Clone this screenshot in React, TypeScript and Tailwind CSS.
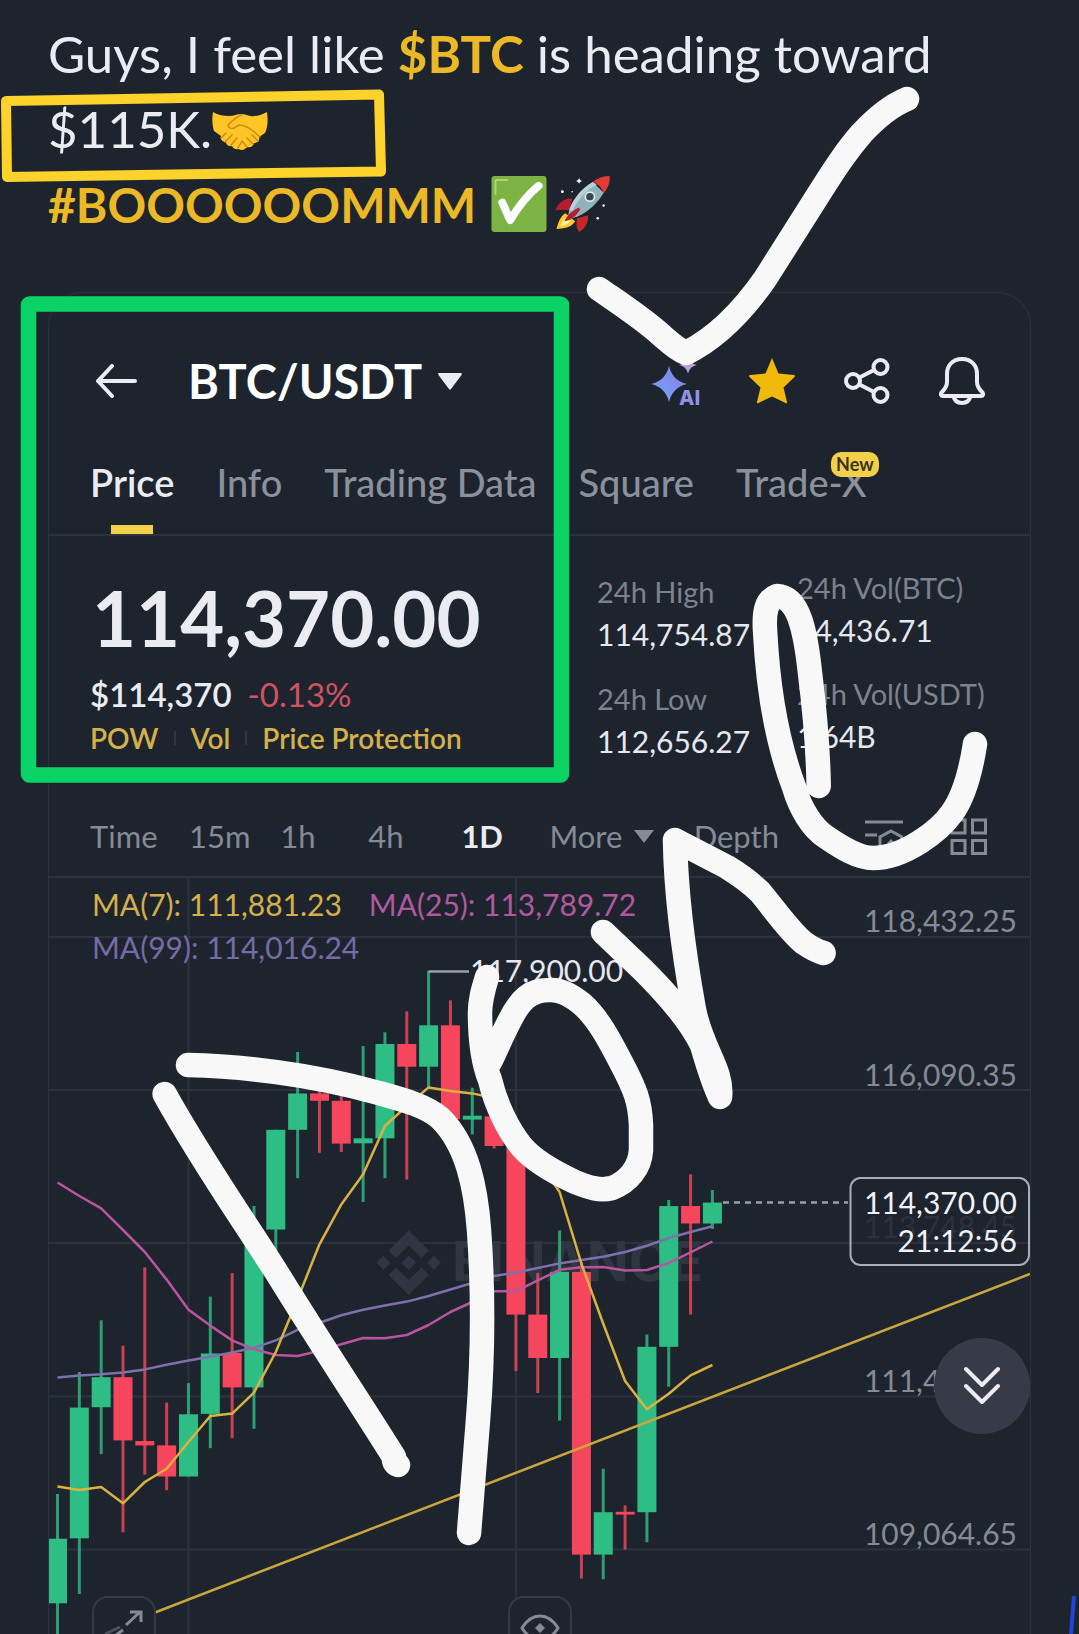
import React from "react";

type Candle = [up: 0 | 1, high: number, top: number, bottom: number, low: number];

const FIRST_X = 57.5;
const STEP = 21.83;
const cx = (i: number) => FIRST_X + STEP * i;

const candles: Candle[] = [
  [1, 1494, 1538.7, 1603.3, 1640],
  [1, 1372, 1407.6, 1538.3, 1594],
  [1, 1320.3, 1377.2, 1407.2, 1454],
  [0, 1345.7, 1377.2, 1440.4, 1532.3],
  [0, 1267.3, 1441, 1445.4, 1474.7],
  [0, 1402.6, 1445.4, 1476.5, 1490.2],
  [1, 1383.2, 1414.3, 1476.5, 1476.5],
  [1, 1296.6, 1353.5, 1413.9, 1448.2],
  [0, 1273, 1353, 1387.4, 1438.3],
  [1, 1206, 1229.5, 1387.4, 1428.8],
  [1, 1129.8, 1129.8, 1229.5, 1256],
  [1, 1052, 1093.5, 1129.8, 1178.2],
  [0, 1088, 1093.4, 1100.8, 1152.8],
  [0, 1090, 1100.8, 1143.6, 1152],
  [1, 1046, 1138.3, 1143.3, 1202],
  [1, 1032.3, 1044, 1138.3, 1178.2],
  [0, 1011.3, 1044, 1066.7, 1179.6],
  [1, 971, 1025.3, 1066.7, 1088],
  [0, 1000.3, 1025.3, 1119.2, 1119.2],
  [1, 1087.7, 1115.7, 1119.6, 1134.4],
  [0, 1116.4, 1116.4, 1146, 1148.5],
  [0, 1146, 1146, 1314.6, 1371.2],
  [0, 1273, 1314.6, 1358, 1393],
  [1, 1230.5, 1271.9, 1358, 1420.6],
  [0, 1262, 1271.9, 1554.6, 1578.6],
  [1, 1468.7, 1512.2, 1554.6, 1579.3],
  [0, 1505.4, 1511.8, 1514.6, 1549.6],
  [1, 1334.4, 1346.8, 1512.2, 1542.2],
  [1, 1200, 1206.1, 1346.8, 1386.7],
  [0, 1174.3, 1206, 1223.5, 1314.6],
  [1, 1190, 1202.6, 1223.5, 1229],
];

const ma7 = [1486.4, 1490, 1487, 1503.3, 1482, 1468.7, 1442, 1416, 1413.6, 1392.7, 1352, 1299, 1244.3, 1204.4, 1174.3, 1126, 1106, 1087.4, 1091, 1093.4, 1098, 1134, 1160, 1192, 1263.7, 1323.8, 1381, 1409.3, 1393.8, 1375.4, 1365];
const ma25 = [1182.5, 1196, 1208.3, 1230, 1252, 1279.6, 1309.7, 1325.6, 1340.4, 1349.3, 1355, 1356, 1350.7, 1344.3, 1338, 1338.3, 1335, 1325, 1312, 1302, 1291.3, 1291.3, 1280.4, 1269.8, 1267.3, 1267, 1270.5, 1270, 1263, 1252.4, 1241.5];
const ma99 = [1377.5, 1375.4, 1374.3, 1372.6, 1369.4, 1364.8, 1360.6, 1356.7, 1352.4, 1347.8, 1340.4, 1329.8, 1322.8, 1315.3, 1309.7, 1305.4, 1301.6, 1296, 1289.5, 1283, 1276, 1272.6, 1268, 1263.4, 1260, 1256.7, 1252, 1245.7, 1238, 1232, 1226.3];

const toPoints = (values: number[]) => values.map((y, i) => `${cx(i)},${y}`).join(" ");

const axis: [number, string][] = [
  [932, "118,432.25"],
  [1086, "116,090.35"],
  [1392, "111,406.55"],
  [1545, "109,064.65"],
];

function Handshake() {
  return (
    <svg viewBox="0 0 56 40" className="inline-block w-14 h-10 -mt-2 align-middle" aria-label="handshake" role="img">
      <path d="M1 1C6 4 12 5 17 5c5 0 8-2 12-2 5 0 8 3 13 2 5 0 9-2 13-4 1 7 1 15-2 21l-6 4c1 4-2 6-5 6-1 4-4 5-7 4-2 3-6 4-8 2-4 1-6-1-7-3-4 1-6-2-6-4-4 0-6-3-5-6L2 20C0 14 0 7 1 1Z" fill="#fdc626" />
      <path d="M17 13c-2 3 1 5 5 4l5-3c5 0 9 2 14 6l7 6M17 13c4-4 8-8 13-9M9 27l5-5M13 31l7-7M19 34l6-7M26 37l4-7M30 30l5 6M35 27l6 6M40 24l6 6" fill="none" stroke="#d08a12" strokeWidth="1.5" strokeLinecap="round" />
    </svg>
  );
}

function CheckEmoji() {
  return (
    <svg viewBox="0 0 56 57" className="inline-block w-14 h-14 ml-0.5 -mt-3 align-middle" aria-label="check mark" role="img">
      <rect width="56" height="57" rx="3" fill="#7cb342" />
      <path d="M4 18V6c0-1 1-2 2-2h10" fill="none" stroke="#aed581" strokeWidth="2" strokeLinecap="round" />
      <path d="m11 27 8 18c9-15 18-26 29-35" fill="none" stroke="#fff" strokeWidth="8" strokeLinecap="round" strokeLinejoin="round" />
    </svg>
  );
}

function Rocket() {
  return (
    <svg viewBox="0 0 56 57" className="inline-block w-14 h-14 ml-2 -mt-3 align-middle" aria-label="rocket" role="img">
      <path d="M17 23C9 22 2 28 0 35c5-1 10-1 14 0Z" fill="#b71c30" />
      <path d="M33 40c1 7-3 14-9 17-3-4-3-9-2-14Z" fill="#c62828" />
      <path d="M10 38C4 42 3 48 1 54c7-1 15-1 19-8Z" fill="#ffca28" />
      <path d="M11 42c-4 3-5 6-6 9 5-1 8-2 10-5Z" fill="#fff59d" />
      <path d="M38 6C27 12 19 22 14 34l-1 6 4 3 6-2c11-5 20-14 26-24Z" fill="#90b4bb" />
      <path d="M38 6C27 12 19 22 14 34l3 2C23 24 31 14 42 9Z" fill="#b8d2d6" />
      <path d="M38 6c5-4 11-6 17-6 1 7-2 13-6 18-1-5-5-10-11-12Z" fill="#e53935" />
      <circle cx="35" cy="21" r="5.5" fill="#e0e6e8" />
      <circle cx="35" cy="21" r="3.8" fill="#37474f" />
      <path d="M24 32c-7 3-12 8-15 14 7-1 12-5 16-12Z" fill="#b71c30" />
      <g fill="#fff">
        <path d="m24 2 1 2 2 1-2 1-1 2-1-2-2-1 2-1Z" />
        <circle cx="7" cy="16" r="1.4" />
        <circle cx="17" cy="16" r="0.8" />
        <circle cx="49" cy="30" r="1.2" />
        <circle cx="43" cy="43" r="1.3" />
      </g>
    </svg>
  );
}

function Annotations() {
  return (
    <svg viewBox="0 0 1079 1634" className="absolute left-0 top-0 w-full pointer-events-none" aria-hidden="true">
      <path d="M6 101 379 94.5 381 171.5 7 177Z" fill="none" stroke="#fdd22a" strokeWidth="10" strokeLinejoin="round" />
      <rect x="28.5" y="304" width="533" height="471" rx="1" fill="none" stroke="#0ad365" strokeWidth="15.5" strokeLinejoin="round" />
      <g fill="none" stroke="#f8f8f8" strokeWidth="24.5" strokeLinecap="round" strokeLinejoin="round">
        <path d="M599 289C622 305 642 318 660 334C668 341 676 349 686 353C716 338 742 312 765 279L815 200C832 173 846 151 862 133C876 118 890 106 907 99" />
        <path d="M818.7 786C818 745 814 705 810 673C806 635 800 597 777 596C766 600 764 612 765 630C768 690 778 745 794 787C800 808 812 828 826 837C842 848 858 858 873 858C905 858 940 830 952 813C965 795 971 770 975 744" />
        <path d="M603 932L643 970C665 992 690 1020 702 1045C707 1062 712 1080 720 1097C723 1070 702 1050 694 1010C685 960 676 900 675 840L727 867C740 875 750 882 760 892C775 910 790 932 804 943Q814 950 823.6 953" />
        <path d="M487 977C483 990 480 1000 480 1013C480 1045 484 1065 490 1080C496 1105 508 1130 522 1147C535 1162 560 1175 575 1182C590 1188 600 1191 612 1188C628 1182 640 1168 641 1150L641 1125C640 1100 634 1088 625 1070C612 1045 600 1020 582 1004C570 994 560 989 549 990C530 990 520 1000 510 1020C502 1035 496 1050 490 1062" />
        <path d="M164.6 1094C200 1158 240 1215 277 1273C315 1335 355 1395 394 1457Q393 1463 398 1465" />
        <path d="M188 1065C240 1066 310 1074 375 1092C400 1099 425 1105 440 1118C468 1145 476 1190 479 1230C484 1300 482 1370 478 1420L469 1533" />
      </g>
      <path d="M1074 1596 1071 1634" stroke="#1f44d8" strokeWidth="4" />
    </svg>
  );
}

function Chart() {
  return (
    <svg viewBox="49 878 981 756" className="block w-full" role="img" aria-label="BTC/USDT daily candles">
      <g stroke="#2c323c" strokeWidth="2">
        {[937, 1090, 1243, 1396.5, 1549.5].map((y) => (
          <path key={y} d={`M49 ${y}H1030`} />
        ))}
        <path d="M188.5 878V1634M516 878V1634" />
      </g>
      <g fill="#2f3541">
        <path d="M408.7 1230.5 429 1250.5 421.500 1258 408.700 1245.500 396 1258 388.500 1250.500ZM388.500 1275 396 1267.500 408.700 1280 421.500 1267.500 429 1275 408.700 1295ZM376.500 1262.700 383.500 1255.700 390.500 1262.700 383.500 1269.700ZM427 1262.700 434 1255.700 441 1262.700 434 1269.700ZM401.500 1262.700 408.700 1255.500 416 1262.700 408.700 1270Z" />
        <text x="452" y="1281" className="font-['Inter'] font-bold text-[55px]">BINANCE</text>
      </g>
      {candles.map(([up, high, top, bottom, low], i) => (
        <g key={i} fill={up ? "#2ebd85" : "#f6465d"}>
          <rect x={cx(i) - 1.5} y={high} width="3" height={low - high} opacity="0.8" />
          <rect x={Math.max(cx(i) - 9.5, 49)} y={top} width={i ? 19 : 18} height={bottom - top} />
        </g>
      ))}
      <g fill="none" strokeWidth="2.500" strokeLinejoin="round">
        <polyline points={toPoints(ma99)} stroke="#7d70ad" />
        <polyline points={toPoints(ma25)} stroke="#b8559f" />
        <polyline points={toPoints(ma7)} stroke="#d9b240" />
        <path d="M155 1612.500 1030 1274" stroke="#c9a63c" />
        <path d="M428.500 971.500H469" stroke="#9a9fa8" />
        <path d="M723 1202.600H848" stroke="#9a9fa8" strokeDasharray="6 5" />
      </g>
      <g className="font-['Lato'] text-[30px]">
        <text x="470" y="982" fill="#e6e8ee">117,900.00</text>
        <g fill="#858a94" textAnchor="end">
          {axis.map(([y, label]) => (
            <text key={label} x="1017" y={y}>{label}</text>
          ))}
          <text x="1017" y="1238" fill="#2c323c">113,748.45</text>
        </g>
        <rect x="850.500" y="1178" width="178.500" height="87" rx="10" fill="none" stroke="#a9adb6" strokeWidth="2" />
        <g fill="#f0f2f6" textAnchor="end">
          <text x="1017" y="1214">114,370.00</text>
          <text x="1017" y="1252">21:12:56</text>
        </g>
      </g>
    </svg>
  );
}

const tabs = ["Price", "Info", "Trading Data", "Square", "Trade-X"];

function Stat({ label, value }: { label: string; value: string }) {
  return (
    <div className="leading-[43px] whitespace-nowrap">
      <dt className="text-[29px] text-[#7d828d]">{label}</dt>
      <dd className="text-[30px] text-[#e6e8ee]">{value}</dd>
    </div>
  );
}

export default function App() {
  return (
    <main className="relative min-h-screen overflow-hidden bg-[#1e242e] font-['Lato',sans-serif] text-[#eaecf2]">
      <p className="pt-4 pl-12 text-[51px] leading-[75px] whitespace-nowrap">
        Guys, I feel like <a href="#btc" className="font-bold text-[#ebb826]">$BTC</a> is heading toward
        <br />
        $115K.
        <Handshake />
        <br />
        <a href="#boom" className="text-[48px] font-bold text-[#ebb826]">#BOOOOOOMMM</a> <CheckEmoji />
        <Rocket />
      </p>

      <section className="mx-12 mt-[50px] border border-b-0 border-[#2c323c] rounded-t-[34px]">
        <header className="flex items-center h-[72px] mt-[52px] pl-[46px] pr-[45px]">
          <button aria-label="Back" className="mr-[51px]">
            <svg viewBox="0 0 42 34" className="block w-[42px] h-[34px]" fill="none" stroke="#eaecf2" strokeWidth="4" strokeLinecap="round" strokeLinejoin="round">
              <path d="M40 17H3M17 2 3 17l14 15" />
            </svg>
          </button>
          <button className="flex items-center gap-4">
            <h1 className="text-[47px] leading-[72px] font-bold text-white">BTC/USDT</h1>
            <svg viewBox="0 0 24 17" className="w-6 h-[17px]" fill="#eaecf2"><path d="M1 0h22c1 0 1 1 .5 2L13 16c-.5 1-1.500 1-2 0L.5 2C0 1 0 0 1 0Z" /></svg>
          </button>
          <div className="flex items-center ml-auto gap-[49px]">
            <button aria-label="AI" className="-mr-1">
              <svg viewBox="0 0 54 54" className="w-[54px] h-[54px] overflow-visible">
                <defs>
                  <linearGradient id="ai" x1="0" x2="1" y1="1" y2="0">
                    <stop offset="0" stopColor="#6fa8f8" />
                    <stop offset="1" stopColor="#8a7be6" />
                  </linearGradient>
                </defs>
                <path d="M19 12c2 9 8 16 18 18-10 2-16 9-18 18C17 39 11 32 1 30c10-2 16-9 18-18Z" fill="url(#ai)" />
                <path d="M38 2c1 5 4 8 9 9-5 1-8 4-9 9-1-5-4-8-9-9 5-1 8-4 9-9Z" fill="#b5a0dc" />
                <text x="29" y="51" fill="#8d92e4" className="font-['Inter'] font-extrabold text-[20px]">AI</text>
              </svg>
            </button>
            <button aria-label="Favorite">
              <svg viewBox="0 0 46 46" className="w-[46px] h-[46px]" fill="#f0b90b"><path d="m23 0 6.500 15.500L45 17c1 0 1.300 1 .5 2L34.500 29.500 38 44c.2 1-.5 1.500-1.500 1L23 38.500 9.500 45c-1 .5-1.700 0-1.500-1l3.500-14.500L.5 19c-.8-1-.5-2 .5-2l15.500-1.500Z" /></svg>
            </button>
            <button aria-label="Share">
              <svg viewBox="0 0 46 46" className="w-[46px] h-[46px]" fill="none" stroke="#eaecf2" strokeWidth="4">
                <circle cx="9" cy="23" r="7" /><circle cx="36.500" cy="9" r="7" /><circle cx="36.500" cy="37" r="7" /><path d="M15.500 19.500 30 12M15.500 26.500 30 34" />
              </svg>
            </button>
            <button aria-label="Alerts">
              <svg viewBox="0 0 46 48" className="w-[46px] h-12" fill="none" stroke="#eaecf2" strokeWidth="4" strokeLinejoin="round">
                <path d="M23 2C13 2 8 9 8 17v8c0 4-2 7-5 10-2 2-1 4 1 4h38c2 0 3-2 1-4-3-3-5-6-5-10v-8C38 9 33 2 23 2ZM14.500 39c1 5 4 7 8.500 7s7.500-2 8.500-7" />
              </svg>
            </button>
          </div>
        </header>

        <nav className="flex items-center gap-[42px] h-[105px] mt-[14px] pl-[41px] border-b-2 border-[#2c323c] text-[38px] font-medium text-[#8b909b] whitespace-nowrap">
          {tabs.map((tab, i) => (
            <a
              key={tab}
              href={`#${tab}`}
              className={i === 0 ? "relative flex items-center h-full font-semibold text-[#eaecf2]" : "relative flex items-center h-full"}
            >
              {tab}
              {i === 0 && <span className="absolute bottom-0 left-1/2 w-[42px] h-[9px] -translate-x-1/2 bg-[#f3d04a]" />}
              {i === 4 && (
                <span className="absolute top-[21px] -right-3 px-[5px] rounded-[10px] bg-[#f3d04a] text-[18px] leading-[25px] font-bold text-[#3a3220]">New</span>
              )}
            </a>
          ))}
        </nav>

        <div className="grid grid-cols-[548fr_200fr_233fr] h-[257px]">
          <div className="pt-[34px] pl-[41px] whitespace-nowrap">
            <div className="pl-0.5 text-[76px] leading-[96px] font-bold">114,370.00</div>
            <div className="flex gap-4 mt-1.5 text-[33px] leading-[44px]">
              <span className="font-semibold">$114,370</span>
              <span className="text-[#cf5262]">-0.13%</span>
            </div>
            <div className="flex items-center gap-[15px] text-[28px] leading-[44px] font-semibold text-[#d4b04a]">
              <a href="#pow">POW</a>
              <span className="w-0.5 h-3.5 bg-[#2f3640]" />
              <a href="#vol">Vol</a>
              <span className="w-0.5 h-3.5 bg-[#2f3640]" />
              <a href="#protection">Price Protection</a>
            </div>
          </div>
          <dl className="flex flex-col gap-[21px] pt-[34px]">
            <Stat label="24h High" value="114,754.87" />
            <Stat label="24h Low" value="112,656.27" />
          </dl>
          <dl className="flex flex-col gap-5 pt-[30px]">
            <Stat label="24h Vol(BTC)" value="14,436.71" />
            <Stat label="24h Vol(USDT)" value="1.64B" />
          </dl>
        </div>

        <div className="grid grid-cols-[99fr_91fr_88fr_93fr_88fr_144fr_171fr_85fr_80fr] items-center justify-items-start h-[85px] pt-1 pl-[41px] border-b-2 border-[#2c323c] text-[31px] text-[#858a94] whitespace-nowrap">
          <button>Time</button>
          <button>15m</button>
          <button>1h</button>
          <button>4h</button>
          <button className="font-bold text-[#eaecf2]">1D</button>
          <button className="flex items-center gap-3">
            More
            <svg viewBox="0 0 20 13" className="w-5 h-[13px]" fill="currentColor"><path d="M0 0h20L10 13Z" /></svg>
          </button>
          <button>Depth</button>
          <button aria-label="Indicators">
            <svg viewBox="0 0 38 38" className="w-[38px] h-[38px]" fill="none" stroke="currentColor" strokeWidth="3">
              <path d="M0 4h38M0 17h12M0 30h12M26 13l11 6v12l-11 6-11-6V19Z" /><path d="m26 21 4 4-4 4-4-4Z" fill="currentColor" stroke="none" />
            </svg>
          </button>
          <button aria-label="Layout">
            <svg viewBox="0 0 38 38" className="w-[38px] h-[38px]" fill="none" stroke="currentColor" strokeWidth="3">
              <path d="M2 2h13v13H2ZM22.500 2h13v13h-13ZM2 22.500h13v13H2ZM22.500 22.500h13v13h-13Z" />
            </svg>
          </button>
        </div>

        <div className="relative overflow-hidden">
          <Chart />
          <div className="absolute top-[5px] left-[43px] flex flex-wrap gap-x-[27px] w-[620px] text-[30px] leading-[43px] whitespace-nowrap">
            <span className="text-[#d4b04a]">MA(7): 111,881.23</span>
            <span className="text-[#b0599f]">MA(25): 113,789.72</span>
            <span className="text-[#766ba6]">MA(99): 114,016.24</span>
          </div>
          <button aria-label="Scroll down" className="absolute right-0 top-[460px] flex items-center justify-center size-24 rounded-full bg-[#373b47]">
            <svg viewBox="0 0 36 40" className="w-9 h-10" fill="none" stroke="#eaecf2" strokeWidth="4" strokeLinecap="round" strokeLinejoin="round">
              <path d="m2 3 16 16L34 3M2 20l16 16 16-16" />
            </svg>
          </button>
          <button aria-label="Draw" className="absolute -bottom-6 left-[43px] flex justify-center pt-3 w-16 h-[62px] rounded-2xl border-2 border-[#343a44] bg-[#1e242e]">
            <svg viewBox="0 0 44 34" className="w-11 h-[34px]" fill="none" stroke="#858a94" strokeWidth="3">
              <path d="M24 15 38 2M28 2h11v10" /><path d="m3 24 15-7" stroke="#4a4f59" /><path d="m14 25 7-5" />
            </svg>
          </button>
          <button aria-label="Show" className="absolute -bottom-6 left-[459px] flex justify-center pt-4 w-16 h-[62px] rounded-2xl border-2 border-[#343a44] bg-[#1e242e]">
            <svg viewBox="0 0 40 28" className="w-10 h-7" fill="none" stroke="#858a94" strokeWidth="3">
              <path d="M2 14C12-2 28-2 38 14 28 30 12 30 2 14Z" /><path d="m20 9 5 5-5 5-5-5Z" fill="#858a94" stroke="none" />
            </svg>
          </button>
        </div>
      </section>
      <Annotations />
    </main>
  );
}
